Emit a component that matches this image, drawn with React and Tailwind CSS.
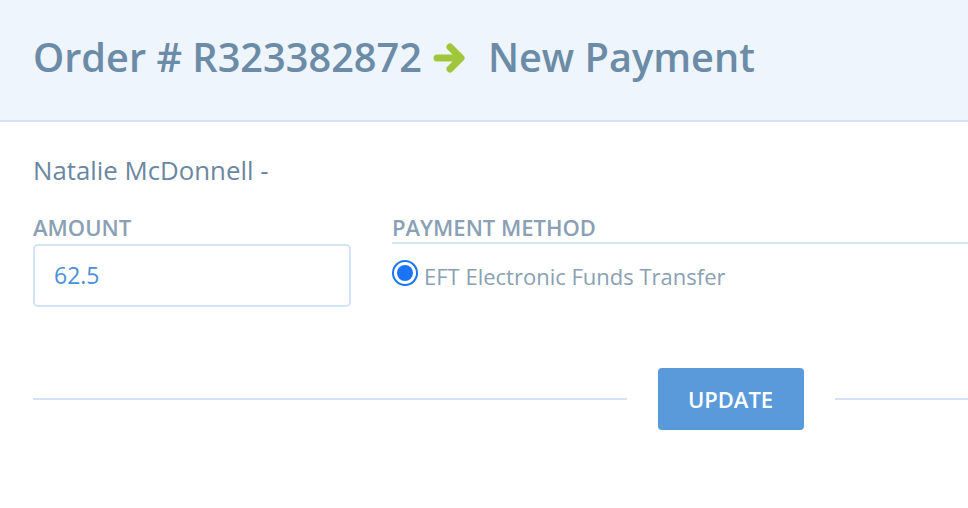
const font = { fontFamily: '"Open Sans", "Liberation Sans", sans-serif' };

const Arrow = () => (
  <svg width="36" height="32" viewBox="0 0 36 32" className="shrink-0">
    <g fill="none" stroke="#a2c63b" strokeWidth="7" strokeLinecap="round" strokeLinejoin="round">
      <path d="M5 16 H28" />
      <path d="M18 5 L29 16 L18 27" />
    </g>
  </svg>
);

export default function App() {
  return (
    <div className="w-full h-[508px] overflow-hidden bg-white" style={font}>
      <div className="w-[1461px]">
        {/* Header */}
        <div className="h-[122px] bg-[#eef5fd] border-b-2 border-[#d3e3f3] flex items-center px-[33px] pb-[4px]">
          <h1 className="text-[39.7px] font-semibold text-[#6b8ba6] flex items-center gap-[10px] leading-none">
            <span>Order # R323382872</span>
            <Arrow />
            <span className="ml-[10px]">New Payment</span>
          </h1>
        </div>

        {/* Body */}
        <div className="px-[33px] pt-[32px]">
          <p className="text-[25.8px] text-[#6b87a1] leading-[32px]">Natalie McDonnell -</p>

          <div className="flex gap-[41px] mt-[27px]">
            <div className="w-[318px]">
              <label className="block text-[22px] font-semibold text-[#8aa0b4] uppercase leading-[28px]">Amount</label>
              <div className="mt-[3px] h-[63px] border-2 border-[#d3e3f3] rounded-[5px] flex items-center px-[19px]">
                <span className="text-[23px] text-[#4a8fd8]">62.5</span>
              </div>
            </div>
            <div className="flex-1">
              <div className="text-[22px] font-semibold text-[#8aa0b4] uppercase leading-[28px] border-b-2 border-[#d3e3f3] pb-[1px]">Payment Method</div>
              <label className="flex items-center gap-[6px] mt-[11px]">
                <span className="w-[26px] h-[26px] rounded-full border-[2.5px] border-[#1b74f5] flex items-center justify-center bg-white">
                  <span className="w-[16px] h-[16px] rounded-full bg-[#1b74f5]" />
                </span>
                <span className="text-[22px] text-[#8aa0b4] leading-[30px] mt-[6px]">EFT Electronic Funds Transfer</span>
              </label>
            </div>
          </div>

          <div className="flex items-center mt-[61px]">
            <div className="flex-1 h-[2px] bg-[#d3e3f3]" />
            <button className="mx-[31px] w-[146px] h-[62px] bg-[#5a9ada] rounded-[4px] text-white text-[22px] font-semibold uppercase">Update</button>
            <div className="flex-1 h-[2px] bg-[#d3e3f3]" />
          </div>
        </div>
      </div>
    </div>
  );
}
